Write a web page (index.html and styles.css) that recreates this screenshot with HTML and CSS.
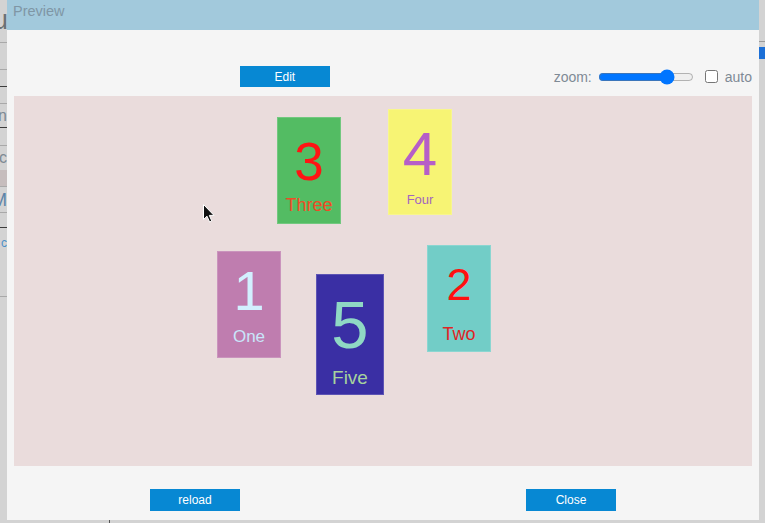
FILE: index.html
```html
<!DOCTYPE html>
<html>
<head>
<meta charset="utf-8">
<link rel="stylesheet" href="styles.css">
</head>
<body>
<div class="page">
  <div class="left-strip">
    <div class="row r-head"><span class="frag big">Menu</span></div>
    <div class="row r-a"></div>
    <div class="row r-b dark"></div>
    <div class="row r-c"></div>
    <div class="row r-d dark"><span class="frag">Item n</span></div>
    <div class="row r-e"></div>
    <div class="row r-f"><span class="frag">Sync</span></div>
    <div class="row r-g shaded"></div>
    <div class="row r-h"><span class="frag blue">M</span></div>
    <div class="row r-i dark"></div>
    <div class="row r-j"><span class="frag blue small">c</span></div>
  </div>
  <div class="right-strip">
    <div class="rs-top"></div>
    <div class="rs-blue"></div>
  </div>
  <div class="bottom-line"></div>
</div>

<div class="dialog">
  <div class="dialog-header">Preview</div>
  <div class="toolbar">
    <div class="edit-wrap"><button class="btn">Edit</button></div>
    <div class="controls">
      <span class="ctl-label">zoom:</span>
      <input class="zoom-range" type="range" min="0" max="100" value="77">
      <input class="auto-check" type="checkbox">
      <span class="ctl-label">auto</span>
    </div>
  </div>
  <div class="canvas">
    <div class="card c3" style="left:263px;top:21px;width:64px;height:107px">
      <div class="num">3</div><div class="lbl">Three</div>
    </div>
    <div class="card c4" style="left:374px;top:13px;width:64px;height:106px">
      <div class="num">4</div><div class="lbl">Four</div>
    </div>
    <div class="card c1" style="left:203px;top:155px;width:64px;height:107px">
      <div class="num">1</div><div class="lbl">One</div>
    </div>
    <div class="card c5" style="left:302px;top:178px;width:68px;height:121px">
      <div class="num">5</div><div class="lbl">Five</div>
    </div>
    <div class="card c2" style="left:413px;top:149px;width:64px;height:107px">
      <div class="num">2</div><div class="lbl">Two</div>
    </div>
    <svg class="cursor" width="12" height="19" viewBox="0 0 12 19">
      <path d="M0.5 0.5 L0.5 15.5 L4 12.2 L6.6 18 L8.8 17 L6.3 11.4 L11 11.4 Z" fill="#111" stroke="#fff" stroke-width="1"/>
    </svg>
  </div>
  <div class="footer">
    <div class="foot-cell"><button class="btn">reload</button></div>
    <div class="foot-cell"><button class="btn">Close</button></div>
  </div>
</div>
</body>
</html>
```

FILE: styles.css
```css
html, body {
  margin: 0;
  padding: 0;
}
body {
  width: 765px;
  height: 523px;
  overflow: hidden;
  background: #d3d3d3;
  font-family: "Liberation Sans", Arial, sans-serif;
  position: relative;
}

/* background page behind the dialog */
.page {
  display: flex;
  justify-content: space-between;
  height: 523px;
}
.left-strip {
  width: 7px;
  overflow: hidden;
  display: flex;
  flex-direction: column;
}
.row {
  display: flex;
  justify-content: flex-end;
  align-items: center;
  border-bottom: 1px solid #a9a9a9;
  box-sizing: border-box;
  white-space: nowrap;
}
.row.dark { border-bottom-color: #3c3c3c; }
.row.shaded { background: #c6bdbd; }
.frag {
  font-size: 16px;
  color: #7d8a94;
  line-height: 1;
}
.frag.big {
  font-size: 28px;
  color: #6a7276;
  margin-right: -1px;
}
.frag.blue { color: #5c84a8; font-size: 18px; }
.frag.small { font-size: 12px; color: #4a90c8; }
.r-head { height: 43px; align-items: flex-start; padding-top: 6px; }
.r-a { height: 27px; }
.r-b { height: 17px; }
.r-c { height: 17px; }
.r-d { height: 24px; }
.r-e { height: 18px; }
.r-f { height: 24px; border-bottom: none; }
.r-g { height: 17px; }
.r-h { height: 26px; }
.r-i { height: 15px; }
.r-j { height: 69px; align-items: flex-start; padding-top: 9px; }

.right-strip {
  width: 6px;
  display: flex;
  flex-direction: column;
}
.rs-top {
  height: 42px;
  border-bottom: 1px solid #9a9a9a;
  box-sizing: border-box;
}
.rs-blue {
  margin-top: 5px;
  height: 12px;
  background: #1c6fd6;
  border-bottom: 5px solid #d3d3d3;
  box-shadow: 0 6px 0 -5px #555;
}
.bottom-line {
  position: absolute;
  left: 109px;
  top: 520px;
  width: 1px;
  height: 3px;
  background: #555;
}

/* dialog */
.dialog {
  position: absolute;
  left: 7px;
  top: 0;
  width: 752px;
  height: 520px;
  background: #f5f5f5;
  display: flex;
  flex-direction: column;
}
.dialog-header {
  height: 30px;
  box-sizing: border-box;
  background: #a2c9dc;
  color: #7f96a5;
  font-size: 14.5px;
  padding: 3px 0 0 6px;
}
.toolbar {
  display: flex;
  align-items: center;
  padding: 36px 7px 9px 0;
  height: 21px;
}
.edit-wrap {
  flex: 1;
  display: flex;
  justify-content: center;
  padding-left: 9px;
}
.btn {
  width: 90px;
  height: 21px;
  border: none;
  margin: 0;
  padding: 0;
  background: #0788d3;
  color: #ffffff;
  font-family: "Liberation Sans", Arial, sans-serif;
  font-size: 12px;
}
.controls {
  display: flex;
  align-items: center;
}
.ctl-label {
  font-size: 14px;
  color: #7f8a95;
  line-height: 16px;
}
.zoom-range {
  width: 96px;
  margin: 0 0 0 6px;
  accent-color: #0075ff;
}
.auto-check {
  width: 13px;
  height: 13px;
  margin: 0 7px 0 11px;
}

.canvas {
  position: relative;
  margin: 0 7px;
  height: 370px;
  background: #eadcdc;
  overflow: hidden;
}
.card {
  position: absolute;
  box-sizing: border-box;
  border: 1px solid rgba(255, 255, 255, 0.18);
  display: flex;
  flex-direction: column;
  align-items: center;
  line-height: 1;
}
.num, .lbl { line-height: 1; }

.c3 { background: #53bc63; padding-top: 17px; }
.c3 .num { font-size: 53px; color: #ff1414; }
.c3 .lbl { font-size: 18px; color: #f04b26; margin-top: 8px; }

.c4 { background: #f7f474; padding-top: 13px; }
.c4 .num { font-size: 62px; color: #b65ec8; }
.c4 .lbl { font-size: 13px; color: #a265c0; margin-top: 8px; }

.c1 { background: #bf7daf; padding-top: 11px; }
.c1 .num { font-size: 56px; color: #d2f0ff; }
.c1 .lbl { font-size: 17px; color: #c9e6fb; margin-top: 9px; }

.c5 { background: #3a2fa4; padding-top: 16px; }
.c5 .num { font-size: 67px; color: #8fd8c4; }
.c5 .lbl { font-size: 19px; color: #a7d39d; margin-top: 10px; }

.c2 { background: #72cdc7; padding-top: 16px; }
.c2 .num { font-size: 45px; color: #ff1010; }
.c2 .lbl { font-size: 18px; color: #e02424; margin-top: 18px; }

.cursor {
  position: absolute;
  left: 189px;
  top: 108px;
}

.footer {
  display: flex;
  padding: 23px 0 9px;
}
.foot-cell {
  flex: 1;
  display: flex;
  justify-content: center;
}
.foot-cell .btn { height: 22px; }
```
